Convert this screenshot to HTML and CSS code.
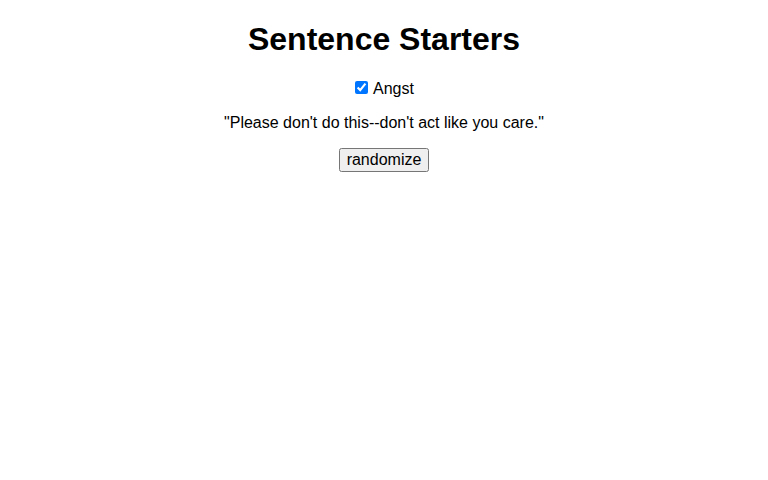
FILE: index.html
```html
<!DOCTYPE html>
<html lang="en">
<head>
<meta charset="UTF-8">
<meta name="viewport" content="width=device-width, initial-scale=1.0">
<title>Sentence Starters</title>
<link rel="stylesheet" href="styles.css">
</head>
<body>
<div class="container">
  <h1>Sentence Starters</h1>
  <div class="categories">
    <label class="category"><input type="checkbox" id="angst" checked>Angst</label>
  </div>
  <p class="prompt">"Please don't do this--don't act like you care."</p>
  <button class="randomize">randomize</button>
</div>
</body>
</html>
```
FILE: styles.css
```css
body {
  font-family: "Liberation Sans", Arial, sans-serif;
  text-align: center;
  margin: 0;
}

h1 {
  font-size: 32px;
  margin: 21px 0 20px;
}

.categories {
  font-size: 16px;
}

.category {
  margin-right: 3px;
}

.category input {
  margin: 3px 5px 3px 4px;
}

.prompt {
  font-size: 16px;
}

.randomize {
  font-family: inherit;
  font-size: 16px;
}
```
